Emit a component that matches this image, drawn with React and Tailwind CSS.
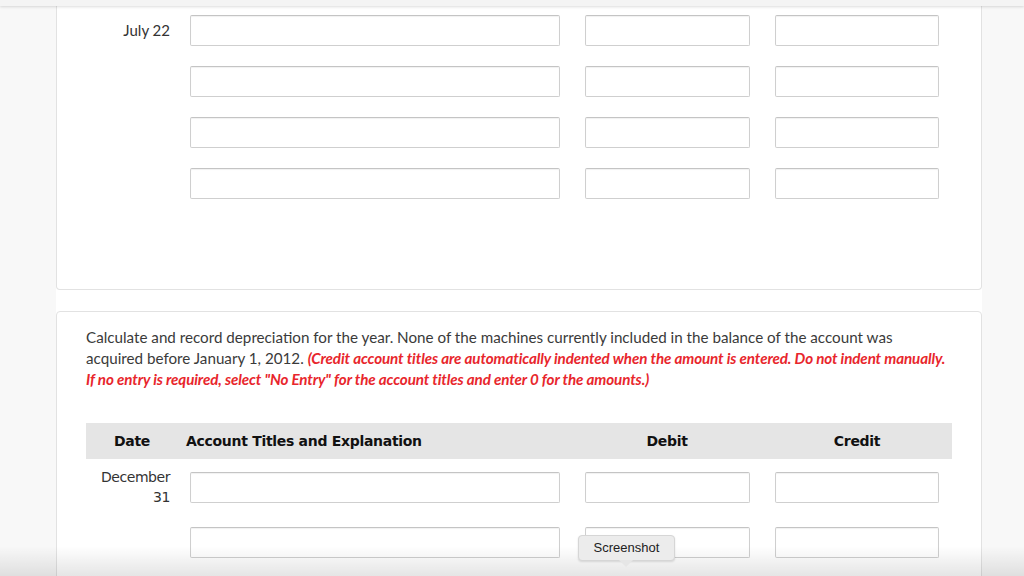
import React from "react";

const inputCls =
  "h-[31px] bg-white border border-[#cfcfcf] border-t-[#c4c4c4] shadow-[inset_0_1px_1px_rgba(0,0,0,0.06)] rounded-[2px]";

function InputRow({ label, rowClass = "" }) {
  return (
    <div className={`flex items-center ${rowClass}`}>
      <div className="w-[104px] pr-[20px] text-right">{label}</div>
      <div className={`w-[370px] ${inputCls}`} />
      <div className={`ml-[25px] w-[165px] ${inputCls}`} />
      <div className={`ml-[25px] w-[164px] ${inputCls}`} />
    </div>
  );
}

export default function App() {
  return (
    <div className="relative w-[1024px] h-[576px] overflow-hidden bg-[#f8f8f8]">
      <div className="ml-[56px] w-[926px] h-full bg-white">
        {/* Card 1 */}
        <div className="border border-t-0 border-[#e2e2e2] rounded-b-[4px] h-[290px] pt-[15px] pl-[29px]">
          <div className="flex flex-col gap-[20px]">
            <InputRow
              label={
                <span className="font-['Lato',sans-serif] text-[15px] text-[#333] relative top-[-1px]">
                  July 22
                </span>
              }
            />
            <InputRow label={null} />
            <InputRow label={null} />
            <InputRow label={null} />
          </div>
        </div>

        {/* Card 2 */}
        <div className="mt-[21px] border border-[#e2e2e2] rounded-t-[4px] h-[300px] pt-[15px] pl-[29px] pr-[20px]">
          <p className="font-['Lato',sans-serif] text-[15.2px] leading-[21px] text-[#3a3a3a] whitespace-nowrap">
            Calculate and record depreciation for the year. None of the machines currently included in the balance of the account was
            <br />
            acquired before January 1, 2012.{" "}
            <span className="italic font-bold text-[#e8262c] tracking-[-0.12px]">
              (Credit account titles are automatically indented when the amount is entered. Do not indent manually.
              <br />
              If no entry is required, select "No Entry" for the account titles and enter 0 for the amounts.)
            </span>
          </p>

          <div className="mt-[33px] w-[866px] h-[36px] bg-[#e5e5e5] flex items-center font-['DejaVu_Sans',sans-serif] font-bold text-[14px] text-[#111] tracking-[-0.3px]">
            <div className="w-[92px] text-center">Date</div>
            <div className="w-[394px] pl-[8px]">Account Titles and Explanation</div>
            <div className="w-[190px] text-center">Debit</div>
            <div className="w-[190px] text-center">Credit</div>
          </div>

          <div className="font-['DejaVu_Sans',sans-serif] text-[14px] leading-[20px] text-[#333] tracking-[-0.45px]">
            <InputRow
              rowClass="mt-[8px] h-[40px]"
              label={
                <span>
                  December
                  <br />
                  31
                </span>
              }
            />
            <InputRow rowClass="mt-[15px] h-[40px]" label={null} />
          </div>
        </div>
      </div>

      {/* top bar */}
      <div className="absolute top-0 left-0 w-full h-[6px] bg-[#f4f4f4] shadow-[0_1px_3px_rgba(0,0,0,0.14)]" />

      {/* bottom fade */}
      <div className="absolute bottom-0 left-0 w-full h-[30px] bg-gradient-to-b from-transparent to-[rgba(0,0,0,0.1)] pointer-events-none" />

      {/* tooltip */}
      <div className="absolute left-[578px] top-[535px]">
        <div className="relative w-[97px] h-[26px] rounded-[4px] bg-[#ececec] border border-[#d6d6d6] shadow-[0_1px_2px_rgba(0,0,0,0.12)] flex items-center justify-center font-['Liberation_Sans',sans-serif] text-[13px] text-[#222]">
          Screenshot
        </div>
        <div className="absolute left-[41px] top-[25px] w-0 h-0 border-l-[7px] border-r-[7px] border-t-[7px] border-l-transparent border-r-transparent border-t-[#e6e6e6]" />
      </div>
    </div>
  );
}
